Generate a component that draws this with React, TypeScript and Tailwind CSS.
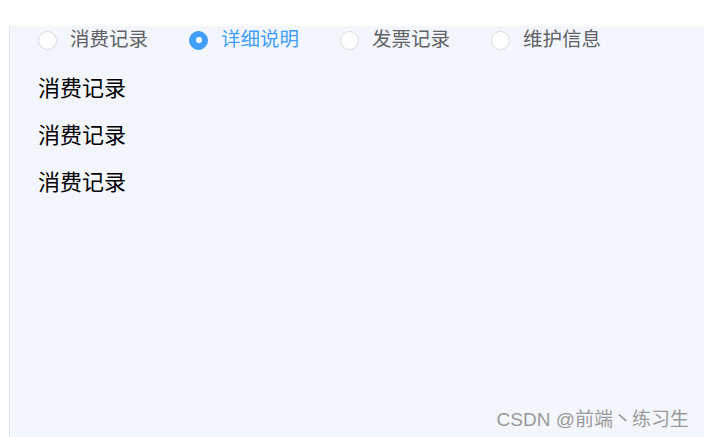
import { useState } from "react";

const tabs = ["消费记录", "详细说明", "发票记录", "维护信息"];

function Radio({ label, checked, onClick }: { label: string; checked: boolean; onClick: () => void }) {
  return (
    <label onClick={onClick} className="mr-[41px] flex cursor-pointer items-center">
      <span
        className={
          checked
            ? "flex h-[19px] w-[19px] items-center justify-center rounded-full border border-[#409eff] bg-[#409eff]"
            : "flex h-[19px] w-[19px] items-center justify-center rounded-full border border-[#d9dce3] bg-white"
        }
      >
        {checked && <span className="h-[6px] w-[6px] rounded-full bg-white" />}
      </span>
      <span className={checked ? "pl-[13px] text-[19.5px] leading-none text-[#409eff]" : "pl-[13px] text-[19.5px] leading-none text-[#606266]"}>
        {label}
      </span>
    </label>
  );
}

export default function App() {
  const [active, setActive] = useState(1);

  return (
    <div
      className="relative flex h-[437px] w-[704px] flex-col bg-white pl-[9px] pt-[26px]"
      style={{ fontFamily: '"Liberation Sans", "Noto Sans CJK SC", sans-serif' }}
    >
      <div className="flex flex-1 flex-col border-l border-[#e4e7ed] bg-[#f3f6fd] pl-[28px]">
        <div className="flex h-[28px] items-center">
          {tabs.map((t, i) => (
            <Radio key={t} label={t} checked={active === i} onClick={() => setActive(i)} />
          ))}
        </div>
        <div className="mt-[22px] flex flex-col gap-[22px] text-[22px] leading-[25px] text-black">
          <p>消费记录</p>
          <p>消费记录</p>
          <p>消费记录</p>
        </div>
      </div>
      <div className="absolute bottom-[8px] right-[15px] text-[19px] leading-none text-[#9a9a9a]">CSDN @前端丶练习生</div>
    </div>
  );
}
